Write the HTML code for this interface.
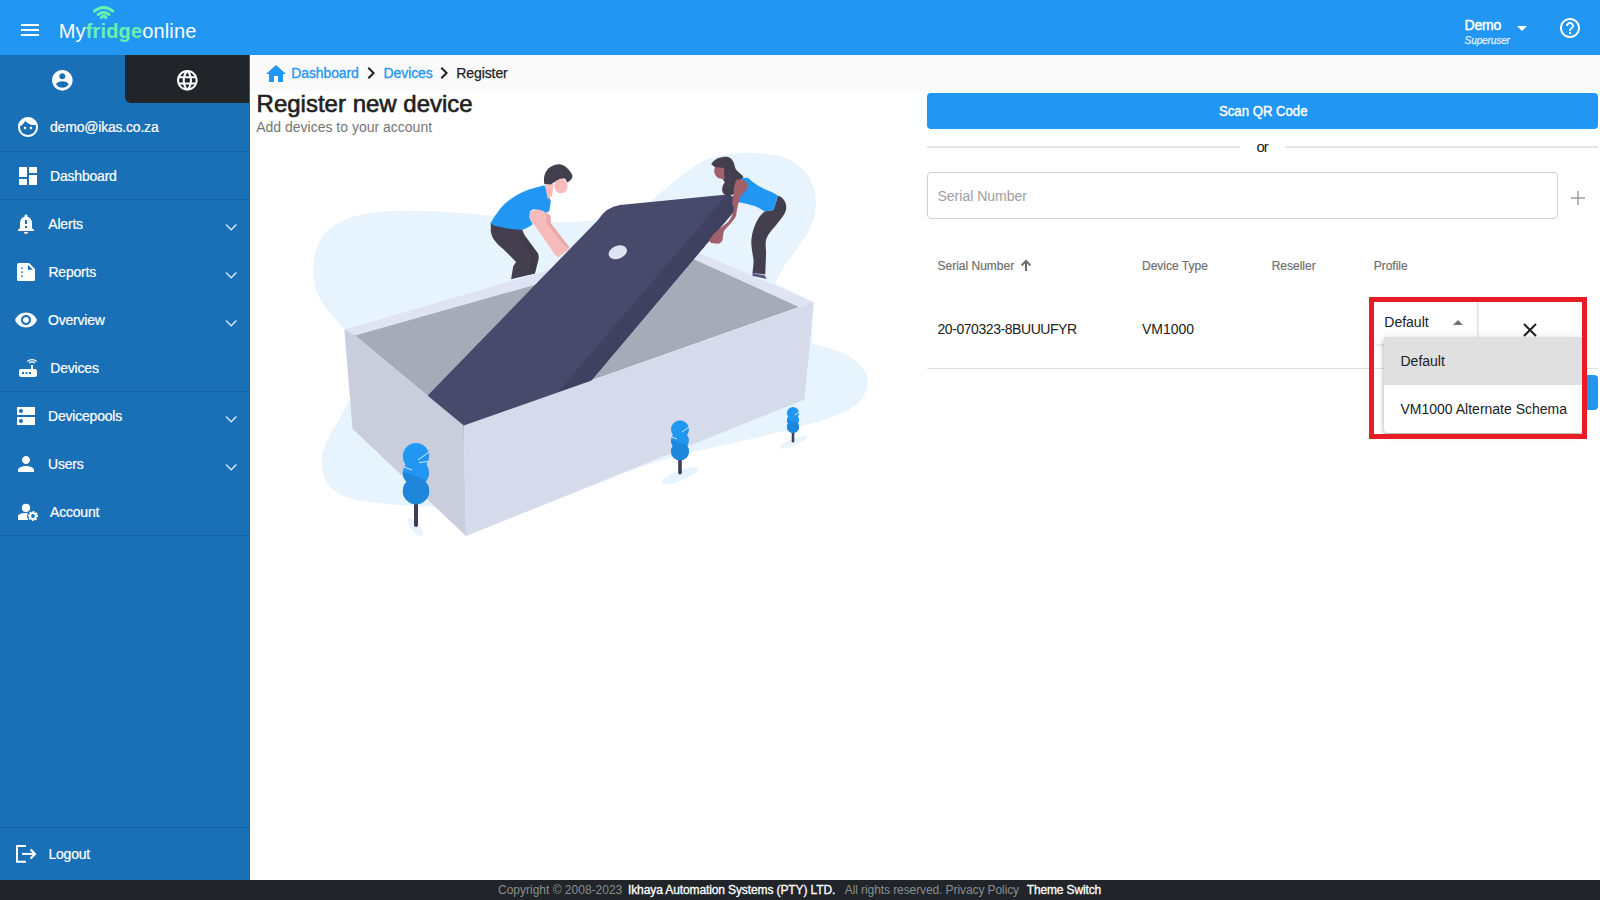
<!DOCTYPE html>
<html><head><meta charset="utf-8">
<style>
*{margin:0;padding:0;box-sizing:border-box}
html,body{width:1600px;height:900px;overflow:hidden;background:#fff;font-family:"Liberation Sans",sans-serif}
.a{position:absolute;line-height:1;white-space:nowrap}
svg{position:absolute;display:block}
#hdr{position:absolute;left:0;top:0;width:1600px;height:55px;background:#2196f3}
#side{position:absolute;left:0;top:55px;width:250px;height:825px;background:#1a70b7}
#crumb{position:absolute;left:250px;top:55px;width:1350px;height:36px;background:#fafafa}
#foot{position:absolute;left:0;top:880px;width:1600px;height:20px;background:#212529}
.sep{position:absolute;left:0;width:250px;height:1px;background:#17619f}
.nav{color:#fff;font-size:14px;letter-spacing:-0.2px;-webkit-text-stroke:0.2px #fff}
.chev{position:absolute}
</style></head><body>
<div id="hdr"></div>
<div id="side"></div>
<div id="crumb"></div>
<div style="position:absolute;left:250px;top:91px;width:12px;height:12px;background:#fafafa"></div>
<div style="position:absolute;left:250px;top:91px;width:12px;height:12px;background:#fff;border-top-left-radius:6px"></div>
<div id="foot"></div>

<!-- header -->
<svg style="left:18px;top:18px" width="24" height="24" viewBox="0 0 24 24"><path fill="#fff" d="M3 18h18v-2H3v2zm0-5h18v-2H3v2zm0-7v2h18V6H3z"/></svg>
<div class="a" style="left:58.8px;top:20.6px;font-size:20px;color:#fff;letter-spacing:0.15px">My<span style="color:#69f0ae;font-weight:bold">fridge</span>online</div>
<svg style="left:0;top:0" width="130" height="25" viewBox="0 0 130 25"><g fill="none" stroke="#69f0ae" stroke-width="3" stroke-linecap="round"><path d="M94.5,11 Q103.6,4 112.7,11"/><path d="M98.2,14.5 Q103.6,10.4 109,14.5"/><path d="M101.3,17.6 Q103.6,14.6 105.9,17.6"/></g></svg>
<div class="a" style="left:1464.6px;top:18.2px;font-size:14px;color:#fff;-webkit-text-stroke:0.45px #fff;letter-spacing:-0.2px">Demo</div>
<div class="a" style="left:1464.6px;top:36px;font-size:10px;color:#e3f0fc;font-style:italic;-webkit-text-stroke:0.25px #e3f0fc;letter-spacing:-0.1px">Superuser</div>
<svg style="left:1510px;top:16px" width="24" height="24" viewBox="0 0 24 24"><path fill="#fff" d="M7 10l5 5 5-5z"/></svg>
<svg style="left:1558px;top:15.5px" width="24" height="24" viewBox="0 0 24 24"><path fill="#fff" d="M11 18h2v-2h-2v2zm1-16C6.48 2 2 6.48 2 12s4.48 10 10 10 10-4.48 10-10S17.52 2 12 2zm0 18c-4.41 0-8-3.59-8-8s3.59-8 8-8 8 3.59 8 8-3.59 8-8 8zm0-14c-2.21 0-4 1.79-4 4h2c0-1.1.9-2 2-2s2 .9 2 2c0 2-3 1.75-3 5h2c0-2.25 3-2.5 3-5 0-2.21-1.79-4-4-4z"/></svg>

<!-- sidebar -->
<div style="position:absolute;left:125px;top:55px;width:125px;height:48px;background:#212529;border-bottom-left-radius:6px"></div><div style="position:absolute;left:249px;top:55px;width:1px;height:825px;background:#1a66ab"></div>
<svg style="left:49.6px;top:67.6px" width="24.7" height="24.7" viewBox="0 0 24 24"><path fill="#fff" d="M12 2C6.48 2 2 6.48 2 12s4.48 10 10 10 10-4.48 10-10S17.52 2 12 2zm0 3c1.66 0 3 1.34 3 3s-1.34 3-3 3-3-1.34-3-3 1.34-3 3-3zm0 14.2c-2.5 0-4.71-1.28-6-3.22.03-1.99 4-3.08 6-3.08 1.99 0 5.97 1.09 6 3.08-1.29 1.94-3.5 3.22-6 3.22z"/></svg>
<svg style="left:174.6px;top:67.6px" width="24.7" height="24.7" viewBox="0 0 24 24"><path fill="#fff" d="M11.99 2C6.47 2 2 6.48 2 12s4.47 10 9.99 10C17.52 22 22 17.52 22 12S17.52 2 11.99 2zm6.93 6h-2.95c-.32-1.25-.78-2.45-1.38-3.56 1.84.63 3.370 1.91 4.33 3.56zM12 4.04c.83 1.2 1.48 2.53 1.91 3.96h-3.82c.43-1.43 1.08-2.76 1.91-3.96zM4.26 14C4.1 13.36 4 12.69 4 12s.1-1.36.26-2h3.38c-.08.66-.14 1.32-.14 2 0 .68.06 1.34.14 2H4.26zm.82 2h2.95c.32 1.25.78 2.45 1.38 3.56-1.84-.63-3.37-1.9-4.33-3.56zm2.95-8H5.08c.96-1.66 2.49-2.93 4.33-3.56C8.81 5.55 8.35 6.75 8.03 8zM12 19.96c-.83-1.2-1.48-2.53-1.91-3.960h3.82c-.43 1.43-1.08 2.76-1.91 3.96zM14.34 14H9.66c-.09-.66-.16-1.32-.16-2 0-.68.07-1.35.16-2h4.68c.09.65.16 1.32.16 2 0 .68-.07 1.34-.16 2zm.25 5.56c.6-1.11 1.06-2.31 1.38-3.56h2.95c-.96 1.65-2.49 2.93-4.33 3.56zM16.36 14c.08-.66.14-1.32.14-2 0-.68-.06-1.34-.14-2h3.38c.16.64.26 1.31.26 2s-.1 1.36-.26 2h-3.38z"/></svg>

<svg style="left:16px;top:115px" width="24" height="24" viewBox="0 0 24 24"><path fill="#fff" d="M9 11.75c-.69 0-1.25.56-1.25 1.25s.56 1.25 1.25 1.25 1.25-.56 1.25-1.25-.56-1.250-1.25-1.25zm6 0c-.69 0-1.25.56-1.25 1.25s.56 1.25 1.25 1.25 1.25-.56 1.25-1.25-.56-1.25-1.25-1.25zM12 2C6.48 2 2 6.48 2 12s4.48 10 10 10 10-4.48 10-10S17.52 2 12 2zm0 18c-4.41 0-8-3.59-8-8 0-.29.02-.58.05-.86 2.36-1.05 4.23-2.98 5.21-5.37C11.07 8.33 14.05 10 17.42 10c.78 0 1.53-.09 2.25-.26.21.71.33 1.47.33 2.26 0 4.41-3.59 8-8 8z"/></svg>
<div class="a nav" style="left:50px;top:120.2px">demo@ikas.co.za</div>
<div class="sep" style="top:151px"></div>

<svg style="left:16px;top:164px" width="24" height="24" viewBox="0 0 24 24"><path fill="#fff" d="M3 13h8V3H3v10zm0 8h8v-6H3v6zm10 0h8V11h-8v10zm0-18v6h8V3h-8z"/></svg>
<div class="a nav" style="left:50px;top:169.2px">Dashboard</div>
<div class="sep" style="top:199px"></div>

<svg style="left:14px;top:211.5px" width="24" height="24" viewBox="0 0 24 24"><path fill="#fff" d="M18 16v-5c0-3.07-1.64-5.64-4.5-6.32V4c0-.83-.67-1.5-1.5-1.5s-1.5.67-1.5 1.5v.68C7.63 5.36 6 7.920 6 11v5l-2 2v1h16v-1l-2-2zm-5 0h-2v-2h2v2zm0-4h-2V8h2v4zm-1 10c1.1 0 2-.89 2-2h-4c0 1.11.89 2 2 2z"/></svg>
<div class="a nav" style="left:48.3px;top:217px">Alerts</div>

<svg style="left:17px;top:263px" width="18" height="18" viewBox="0 0 18 18"><path fill="#fff" d="M1.5,0 H12 L18,6 V16.5 Q18,18 16.5,18 H1.5 Q0,18 0,16.5 V1.5 Q0,0 1.5,0 Z"/><path fill="#1a70b7" d="M11,1.9 V6.8 H15.9 Z"/><rect x="4.1" y="4.3" width="1.9" height="1.8" fill="#5b95cb"/><rect x="4.1" y="8.3" width="1.9" height="1.8" fill="#5b95cb"/><rect x="4.1" y="12.3" width="1.9" height="1.8" fill="#5b95cb"/></svg>
<div class="a nav" style="left:48.4px;top:265.4px">Reports</div>

<svg style="left:14px;top:307.5px" width="24" height="24" viewBox="0 0 24 24"><path fill="#fff" d="M12 4.5C7 4.5 2.73 7.61 1 12c1.73 4.39 6 7.5 11 7.5s9.27-3.11 11-7.5c-1.73-4.39-6-7.5-11-7.5zM12 17c-2.76 0-5-2.24-5-5s2.24-5 5-5 5 2.24 5 5-2.24 5-5 5zm0-8c-1.66 0-3 1.34-3 3s1.34 3 3 3 3-1.34 3-3-1.34-3-3-3z"/></svg>
<div class="a nav" style="left:48px;top:313.4px">Overview</div>

<svg style="left:16px;top:356px" width="24" height="24" viewBox="0 0 24 24"><path fill="#fff" d="M20.2 5.9l.8-.8C19.6 3.7 17.8 3 16 3s-3.6.7-5 2.1l.8.8C13 4.8 14.5 4.2 16 4.2s3 .6 4.2 1.7zm-.9.8c-.9-.9-2.1-1.4-3.3-1.4s-2.4.5-3.3 1.4l.8.8c.7-.7 1.6-1 2.5-1 .9 0 1.8.3 2.5 1l.8-.8zM19 13h-2V9h-2v4H5c-1.1 0-2 .9-2 2v4c0 1.1.9 2 2 2h14c1.1 0 2-.9 2-2v-4c0-1.1-.9-2-2-2zM8 18H6v-2h2v2zm3.5 0h-2v-2h2v2zm3.5 0h-2v-2h2v2z"/></svg>
<div class="a nav" style="left:50.3px;top:361.2px">Devices</div>
<div class="sep" style="top:391px"></div>

<svg style="left:14px;top:403.6px" width="24" height="24" viewBox="0 0 24 24"><path fill="#fff" d="M3 13h18v8H3zM3 3h18v8H3z"/><circle cx="7" cy="17" r="2" fill="#1a70b7"/><circle cx="7" cy="7" r="2" fill="#1a70b7"/></svg>
<div class="a nav" style="left:48px;top:409.2px">Devicepools</div>

<svg style="left:13.8px;top:452px" width="24" height="24" viewBox="0 0 24 24"><path fill="#fff" d="M12 12c2.21 0 4-1.79 4-4s-1.79-4-4-4-4 1.79-4 4 1.79 4 4 4zm0 2c-2.67 0-8 1.34-8 4v2h16v-2c0-2.66-5.33-4-8-4z"/></svg>
<div class="a nav" style="left:48px;top:457.2px">Users</div>

<svg style="left:10px;top:495px" width="35" height="35" viewBox="0 0 35 35"><circle cx="15.95" cy="12.8" r="4.1" fill="#fff"/><path fill="#fff" d="M8,25 V21.3 C8,18.6 12,17.9 16,17.9 C17,17.9 18,18 18.6,18.1 L18.6,25 Z"/><circle cx="22.96" cy="21" r="6" fill="#1a70b7"/><circle cx="22.96" cy="21" r="3.9" fill="#fff"/><circle cx="22.96" cy="21" r="4.3" fill="none" stroke="#fff" stroke-width="1.6" stroke-dasharray="1.75 1.63" transform="rotate(-11 22.96 21)"/><circle cx="22.96" cy="21" r="1.9" fill="#1a70b7"/></svg>
<div class="a nav" style="left:50px;top:505.2px">Account</div>
<div class="sep" style="top:535px"></div>

<svg style="left:0;top:200px" width="250" height="340" viewBox="0 200 250 340"><g fill="none" stroke="#d6e4f2" stroke-width="1.5"><path d="M226 224.5l5.2 5.3 5.2-5.3"/><path d="M226 272.5l5.2 5.3 5.2-5.3"/><path d="M226 320.5l5.2 5.3 5.2-5.3"/><path d="M226 416.5l5.2 5.3 5.2-5.3"/><path d="M226 464.5l5.2 5.3 5.2-5.3"/></g></svg>

<div class="sep" style="top:827px"></div>
<svg style="left:0;top:830px" width="50" height="40" viewBox="0 830 50 40"><g fill="none" stroke="#fff" stroke-width="2"><path d="M26,846 H17 V861.8 H26"/><path d="M22,853.9 H34.3"/><path d="M30.6,849.4 L35,853.9 L30.6,858.4" stroke-width="2.2"/></g></svg>
<div class="a nav" style="left:48.4px;top:846.6px">Logout</div>

<!-- breadcrumb -->
<svg style="left:264px;top:62.2px" width="24" height="24" viewBox="0 0 24 24"><path fill="#2196f3" d="M10 20v-6h4v6h5v-8h3L12 3 2 12h3v8z"/></svg>
<div class="a" style="left:291.2px;top:66.3px;font-size:14px;color:#2196f3;-webkit-text-stroke:0.3px #2196f3;letter-spacing:-0.1px">Dashboard</div>
<svg style="left:359px;top:61px" width="24" height="24" viewBox="0 0 24 24"><path fill="#212121" d="M10 6L8.59 7.41 13.17 12l-4.58 4.59L10 18l6-6z"/></svg>
<div class="a" style="left:383.6px;top:66.3px;font-size:14px;color:#2196f3;-webkit-text-stroke:0.3px #2196f3;letter-spacing:-0.1px">Devices</div>
<svg style="left:432px;top:61px" width="24" height="24" viewBox="0 0 24 24"><path fill="#212121" d="M10 6L8.59 7.41 13.17 12l-4.58 4.59L10 18l6-6z"/></svg>
<div class="a" style="left:456.3px;top:66.3px;font-size:14px;color:#212121;-webkit-text-stroke:0.25px #212121;letter-spacing:-0.1px">Register</div>

<div id="h1" class="a" style="left:256.6px;top:91.8px;font-size:24px;color:#212121;-webkit-text-stroke:0.6px #212121">Register new device</div>
<div class="a" style="left:256.2px;top:119.9px;font-size:14px;color:#757575">Add devices to your account</div>

<!-- right panel -->
<div style="position:absolute;left:927px;top:93px;width:671px;height:36px;background:#2196f3;border-radius:4px"></div>
<div class="a" style="left:1218.5px;top:104.2px;font-size:14px;color:#fff;-webkit-text-stroke:0.4px #fff;transform:scaleX(0.94);transform-origin:0 0">Scan QR Code</div>
<div style="position:absolute;left:927px;top:146px;width:313px;height:2px;background:#e6e6e6"></div>
<div style="position:absolute;left:1285px;top:146px;width:313px;height:2px;background:#e6e6e6"></div>
<div class="a" style="left:1256.5px;top:139.4px;font-size:15px;color:#212121;letter-spacing:-1px">or</div>
<div style="position:absolute;left:927px;top:172px;width:631px;height:47px;border:1px solid #d0d0d0;border-radius:4px"></div>
<div class="a" style="left:937.5px;top:189px;font-size:14px;color:#9e9e9e">Serial Number</div>
<svg style="left:1570px;top:190px" width="16" height="16" viewBox="0 0 16 16"><path stroke="#9e9e9e" stroke-width="1.5" d="M8 1v14M1 8h14"/></svg>

<div class="a" style="left:937.5px;top:260px;font-size:12px;color:#707070;-webkit-text-stroke:0.2px #707070">Serial Number</div>
<svg style="left:1010px;top:255px" width="30" height="20" viewBox="1010 255 30 20"><g fill="none" stroke="#6b6b6b" stroke-width="2"><path d="M1026,271 V261.5"/><path d="M1021.6,265.4 L1026,261 L1030.4,265.4"/></g></svg>
<div class="a" style="left:1142px;top:260px;font-size:12px;color:#707070;-webkit-text-stroke:0.2px #707070">Device Type</div>
<div class="a" style="left:1271.7px;top:260px;font-size:12px;color:#707070;-webkit-text-stroke:0.2px #707070">Reseller</div>
<div class="a" style="left:1373.7px;top:260px;font-size:12px;color:#707070;-webkit-text-stroke:0.2px #707070">Profile</div>

<div class="a" style="left:937.5px;top:322.2px;font-size:14px;color:#212121;letter-spacing:-0.44px">20-070323-8BUUUFYR</div>
<div class="a" style="left:1142px;top:322.2px;font-size:14px;color:#212121">VM1000</div>
<div style="position:absolute;left:927px;top:368px;width:671px;height:1px;background:#e0e0e0"></div>

<div style="position:absolute;left:1540px;top:375px;width:58px;height:35px;background:#2196f3;border-radius:4px"></div>

<div style="position:absolute;left:1374px;top:297px;width:104px;height:47px;border-radius:4px;box-shadow:0 1px 3px rgba(0,0,0,.14);background:#fff"></div>
<div style="position:absolute;left:1477px;top:300px;width:1px;height:40px;background:#e0e0e0"></div>
<div class="a" style="left:1384.3px;top:315.2px;font-size:14px;color:#212121">Default</div>
<svg style="left:1453.4px;top:320px" width="10" height="5" viewBox="0 0 10 5"><path fill="#757575" d="M0 5L5 0l5 5z"/></svg>
<svg style="left:1523px;top:323.3px" width="14" height="14" viewBox="0 0 14 14"><path stroke="#212121" stroke-width="2" d="M1 1l12 12M13 1L1 13"/></svg>

<div style="position:absolute;left:1384px;top:337px;width:198px;height:96px;background:#fff;border-radius:0 0 4px 4px;box-shadow:0 2px 4px -1px rgba(0,0,0,.2),0 4px 5px 0 rgba(0,0,0,.14),0 1px 10px 0 rgba(0,0,0,.12)"></div>
<div style="position:absolute;left:1384px;top:337px;width:198px;height:48px;background:#e0e0e0"></div>
<div class="a" style="left:1400.5px;top:354.2px;font-size:14px;color:#212121">Default</div>
<div class="a" style="left:1400.5px;top:402.2px;font-size:14px;color:#212121">VM1000 Alternate Schema</div>

<div style="position:absolute;left:1369px;top:297px;width:218px;height:142px;border:5px solid #e81c24"></div>

<!-- footer -->
<div class="a" style="left:498px;top:883.9px;font-size:12px;color:#8a8d90">Copyright © 2008-2023</div>
<div class="a" style="left:628px;top:883.9px;font-size:12px;color:#fff;-webkit-text-stroke:0.3px #fff;letter-spacing:-0.11px">Ikhaya Automation Systems (PTY) LTD.</div>
<div class="a" style="left:844.8px;top:883.9px;font-size:12px;color:#8a8d90;letter-spacing:-0.09px">All rights reserved. Privacy Policy</div>
<div class="a" style="left:1026.8px;top:883.9px;font-size:12px;color:#fff;-webkit-text-stroke:0.3px #fff;letter-spacing:-0.15px">Theme Switch</div>

<!-- ILLUSTRATION -->
<svg id="ill" style="left:0;top:0" width="1600" height="900" viewBox="0 0 1600 900">
<path fill="#e8f4fd" d="M344,329 C335,318 322,306 316,290 C311,272 313,252 321,239 C332,220 360,211 402,210.7 C440,210 500,216 551,222 C570,223 590,221 600,219 L648,203 C665,190 690,165 710,158 C730,152 755,151 780,156 C805,163 817,185 816,205 C815,228 800,245 785,265 L775,283 L813,302 L812,344 C835,348 860,357 867,375 C872,395 855,410 830,418 C800,428 760,437 715,447 C690,452 660,460 635,469 L466,536 L442,507 C405,506 370,504 345,497 C328,490 320,475 322,457 C325,440 335,427 350,400 Z"/>
<path fill="#dfe3f3" d="M344.5,329.5 L662.4,237.3 L813.8,302.2 L799,307 L667.7,247.4 L355,335.5 Z"/>
<path fill="#a7abb7" d="M355,335.5 L667.7,247.4 L799,307 L463.75,425.5 Z"/>
<g id="man">
<path fill="#433f4f" d="M490.8,222 L490.8,231.6 C491.5,235 492.5,238 494.4,240.2 C497,243.5 500,246.5 503.1,248.9 L516.1,261.9 L513.2,266.2 L511.1,279.2 L534.9,273.4 L538.5,259 C538.7,256.5 538.5,255 537.8,253.2 L524.8,235.9 L521.9,229 L508.9,227 Z"/>
<path fill="#3c3848" d="M521.9,231 L537.8,253.2 C538.5,255 538.7,256.5 538.5,259 L534.9,273.4 L528,275 L531,260 C531.5,256 530,252 527,248 L518,236 Z" opacity="0.6"/>
<path fill="#eaa9a9" d="M545,211.5 L550.8,215.7 L550.8,222.9 L569.6,247.4 L566.7,250.3 L564,247 L545.5,223.5 Z"/>
<path fill="#2196f3" d="M490.8,223.6 C492,220 496,214 501.7,207 C506,202 511,198.5 516.1,195.4 C521,192.5 526,190.5 530.6,188.9 L544.3,185.3 L547.2,191.1 C548,194 549,196.5 550.8,201.2 L549.3,211.3 L545.7,212.8 C543,211 538,209.5 533.4,209.2 C531,210 530,211 529.8,212.8 C529.5,215 529.5,217 529.8,218.6 L532.7,224.3 C529,227 525,229 521.9,230.1 L508.9,228.7 L494.4,225.8 Z"/>
<path fill="#f8bbbb" d="M545,184.6 L553.7,183.9 L552.2,195.4 L547.9,199 L546.4,192.6 Z"/>
<ellipse cx="561" cy="186" rx="6.6" ry="7.3" fill="#f8bbbb"/>
<path fill="#433f4f" d="M547.9,168.7 C551,166 556,164 560.9,164.4 C565,165 570,170 572.4,175.2 C572.5,178 571.5,180 567.4,182.4 L565.2,178.8 C562,178 559,178.5 555.1,181.7 L550.8,184.6 L544.3,183.9 C543.5,180 544,175 545.7,172.3 Z"/>
<path fill="#f8bbbb" d="M529.8,212.8 C531,211 533,210 534.9,209.9 C538,209.5 541,210 543.6,211.3 C546,213 547,215 546.5,218 L546,223 L565,246.5 L569,249 L558,257.6 L555.1,254.7 L534.9,225.8 C532,222 530,220 529.8,218.6 Z"/>
</g>
<path fill="#474a6a" d="M384.5,440 L598,220 Q606,207 620,205 L727,194.6 Q736.5,195.5 736.5,208.5 L541.1,440 Z"/>
<path fill="#3e4260" d="M727,194.6 Q736.5,195.5 736.5,208.5 L541.1,440 L517.1,440 Z"/>
<ellipse cx="617.8" cy="252.2" rx="9.5" ry="6.5" transform="rotate(-22 617.8 252.2)" fill="#dfe3f3"/>
<path fill="#c9cddc" d="M344.5,329.5 L355,335.5 L463.75,425.5 L466,536 L352.5,428.75 Z"/>
<path fill="#d5dbea" d="M463.75,425.5 L813.8,302.2 L804.5,399.5 L466,536 Z"/>
<g id="woman">
<path fill="#433f4f" d="M778,195.75 C783,197 786.5,202 786.25,208 C786,214 780,220 775,226.5 C770,232 767,236 766,240 C765,246 766.5,252 766,255 L765.25,274.5 L752.5,273 C753,268 754,262 753.25,258 C752,250 750.5,243 751.75,237 C753,228 757,220 760,216 L764.5,211.5 L773.5,210 Z"/>
<path fill="#575a89" d="M752.5,273 L764.5,275.25 L766.75,279 L760,277.5 L752.5,276 Z"/>
<path fill="#2196f3" d="M736,178.5 L748,177.75 C752,182 760,187 764.5,189 C770,191.5 775,193 778,195.75 L773.5,210 L764.5,211.5 C760,208 755,206 752.5,205.5 C748,204 744,203 739.75,202.5 L733,199.5 L733.75,193.5 Z"/>
<path fill="#a0616a" d="M733,195 L739.75,199.5 L737,207.5 L732.25,205.5 Z"/>
<path fill="#433f4f" d="M711.25,164.25 C713,160 720,156 727,156.75 C732,157.5 734,162 735.25,168 C737,172 742,174 743.5,177 L738.25,181.5 C734,184 734,188 736,192 C734,195 728,197 724,194.25 C721,191 722,186 724.75,182.25 L722,178 L716,168 Z"/>
<path fill="#a0616a" d="M715,167 C713,171 715,176 718,178 L724.5,179.5 L724,168 Z"/>
<path fill="#a0616a" d="M736,180 C740,178.5 745,179 748,184.5 C748,189 744,193 740.5,196.5 C738.5,200 737.5,204 737.5,207 L736,216 C733,222 727,227 724,231 C723,235 723,238 722.5,240 C721,242.5 719.5,243.75 718,243.75 L711.25,243 L709,240.75 L713.5,234 C719,229 726,224 729.25,220.5 C731.5,217 733,213 733.75,210 L733.75,189 Z"/>
</g>
<g id="trees"><ellipse cx="415" cy="527" rx="11" ry="4.5" transform="rotate(50 415 527)" fill="#e8f4fd"/><rect x="414.0" y="491" width="4" height="36" rx="2.0" fill="#3f3d56"/><clipPath id="tc1"><circle cx="416" cy="456.3" r="13.2"/><circle cx="416" cy="472.5" r="13.2"/><circle cx="416" cy="491" r="13.2"/></clipPath><g clip-path="url(#tc1)"><rect x="401.8" y="442.1" width="28.4" height="63.09999999999999" fill="#2196f3"/><path d="M402,471.5 L430,481 L430.2,505.2 L401.8,505.2 Z" fill="#1e87dc"/></g><ellipse cx="680" cy="475.5" rx="20" ry="5" transform="rotate(-22 680 475.5)" fill="#e8f4fd"/><rect x="678.2" y="451.3" width="3.6" height="23.19999999999999" rx="1.8" fill="#3f3d56"/><clipPath id="tc2"><circle cx="680" cy="429.3" r="9"/><circle cx="680" cy="440.5" r="9"/><circle cx="680" cy="451.3" r="9"/></clipPath><g clip-path="url(#tc2)"><rect x="670" y="419.3" width="20" height="42.0" fill="#2196f3"/><path d="M670,439.5 L690,446 L690,461.3 L670,461.3 Z" fill="#1e87dc"/></g><ellipse cx="793" cy="442.5" rx="14" ry="3.5" transform="rotate(-22 793 442.5)" fill="#e8f4fd"/><rect x="791.7" y="427" width="2.6" height="15.5" rx="1.3" fill="#3f3d56"/><clipPath id="tc3"><circle cx="793" cy="413" r="6.1"/><circle cx="793" cy="420" r="6.1"/><circle cx="793" cy="427" r="6.1"/></clipPath><g clip-path="url(#tc3)"><rect x="785.9" y="405.9" width="14.2" height="28.2" fill="#2196f3"/><path d="M786,419.5 L800,423.5 L800.1,434.1 L785.9,434.1 Z" fill="#1e87dc"/></g><g stroke="#d9ecfc" stroke-width="1" fill="none"><path d="M418,460 L429,452"/><path d="M419,462.5 L429,461.5"/><path d="M404,467 L412,470"/><path d="M682,432 L689,427"/><path d="M672,437 L677,439"/><path d="M795,415 L799,412"/></g></g>
</svg>
</body></html>
